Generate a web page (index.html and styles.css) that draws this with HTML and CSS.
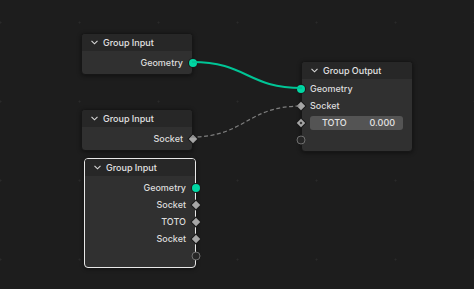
FILE: index.html
```html
<!DOCTYPE html>
<html>
<head>
<meta charset="utf-8">
<link rel="stylesheet" href="styles.css">
</head>
<body>
<div class="canvas">
  <svg class="links" width="474" height="289" viewBox="0 0 474 289">
    <path d="M192,62 C247,62 247,88 302,88" class="link-geo"/>
    <path d="M191,137 C246,137 246,106 302,106" class="link-dash"/>
  </svg>

  <div class="node n1">
    <div class="header"><svg class="chev" width="7" height="5" viewBox="0 0 7 5"><polyline points="0.5,0.8 3.5,3.8 6.5,0.8"/></svg><span>Group Input</span></div>
    <div class="body">
      <div class="row out">Geometry<i class="sock geo"></i></div>
    </div>
  </div>

  <div class="node n2">
    <div class="header"><svg class="chev" width="7" height="5" viewBox="0 0 7 5"><polyline points="0.5,0.8 3.5,3.8 6.5,0.8"/></svg><span>Group Input</span></div>
    <div class="body">
      <div class="row out">Socket<i class="sock dia"></i></div>
    </div>
  </div>

  <div class="node n3 selected">
    <div class="header"><svg class="chev" width="7" height="5" viewBox="0 0 7 5"><polyline points="0.5,0.8 3.5,3.8 6.5,0.8"/></svg><span>Group Input</span></div>
    <div class="body">
      <div class="row out">Geometry<i class="sock geo"></i></div>
      <div class="row out">Socket<i class="sock dia"></i></div>
      <div class="row out">TOTO<i class="sock dia"></i></div>
      <div class="row out">Socket<i class="sock dia"></i></div>
      <div class="row out"><i class="sock virt"></i></div>
    </div>
  </div>

  <div class="node n4">
    <div class="header"><svg class="chev" width="7" height="5" viewBox="0 0 7 5"><polyline points="0.5,0.8 3.5,3.8 6.5,0.8"/></svg><span>Group Output</span></div>
    <div class="body tight">
      <div class="row in"><i class="sock geo"></i>Geometry</div>
      <div class="row in"><i class="sock dia"></i>Socket</div>
      <div class="row in"><i class="sock dia dot"></i><div class="field"><span>TOTO</span><span>0.000</span></div></div>
      <div class="row in"><i class="sock virt"></i></div>
    </div>
  </div>
</div>
</body>
</html>
```

FILE: styles.css
```css
html, body {
  margin: 0;
  padding: 0;
  background: #1d1d1d;
}
.canvas {
  position: relative;
  width: 474px;
  height: 289px;
  overflow: hidden;
  background-color: #1d1d1d;
  background-image: radial-gradient(circle, #2a2a2a 0.8px, transparent 1.2px);
  background-size: 79px 79px;
  background-position: -39px -17px;
  font-family: Inter, "DejaVu Sans", sans-serif;
  font-size: 9px;
  font-weight: 500;
  color: #dddddd;
}
.links {
  position: absolute;
  left: 0;
  top: 0;
  z-index: 2;
  pointer-events: none;
}
.link-geo {
  fill: none;
  stroke: #00c596;
  stroke-width: 2;
}
.link-dash {
  fill: none;
  stroke: #7e7e7e;
  stroke-width: 1.2;
  stroke-dasharray: 4 2.5;
}
.node {
  position: absolute;
  background: #303030;
  border: 1px solid #161616;
  border-radius: 4px;
  box-shadow: 0 1px 4px rgba(0,0,0,0.45);
  z-index: 1;
}
.node.selected {
  border-color: #e8e8e8;
}
.n1 { left: 81px; top: 33px; width: 110px; }
.n2 { left: 81px; top: 109px; width: 110px; }
.n3 { left: 84px; top: 158px; width: 110px; }
.n4 { left: 301px; top: 61px; width: 110px; }
.header {
  height: 17px;
  display: flex;
  align-items: center;
  gap: 5px;
  padding-left: 9px;
  background: #272727;
  border-radius: 3px 3px 0 0;
  color: #e2e2e2;
}
.chev {
  fill: none;
  stroke: #d8d8d8;
  stroke-width: 1.1;
}
.body {
  padding: 3px 0 3px;
}
.body.tight {
  padding: 1px 0 3px;
}
.row {
  position: relative;
  height: 17px;
  display: flex;
  align-items: center;
}
.row.out {
  justify-content: flex-end;
  padding-right: 9px;
}
.row.in {
  padding-left: 8px;
}
.sock {
  position: absolute;
  top: 50%;
  z-index: 3;
}
.row.out .sock { right: -1px; transform: translate(50%, -50%); }
.row.in .sock { left: -1px; transform: translate(-50%, -50%); }
.sock.geo {
  width: 8px;
  height: 8px;
  border-radius: 50%;
  background: #00d6a3;
  box-shadow: 0 0 0 1px #1a1a1a;
}
.sock.dia {
  width: 6px;
  height: 6px;
  background: #a6a6a6;
  box-shadow: 0 0 0 1px #1a1a1a;
}
.row.out .sock.dia { transform: translate(50%, -50%) rotate(45deg); }
.row.in .sock.dia { transform: translate(-50%, -50%) rotate(45deg); }
.sock.dia.dot::after {
  content: "";
  position: absolute;
  left: 2px;
  top: 2px;
  width: 2px;
  height: 2px;
  background: #2a2a2a;
}
.sock.virt {
  width: 7px;
  height: 7px;
  border-radius: 50%;
  background: #262626;
  border: 1px solid #6e6e6e;
}
.field {
  flex: 1;
  margin-right: 9px;
  height: 14px;
  background: #545454;
  border-radius: 3px;
  display: flex;
  align-items: center;
  justify-content: space-between;
  padding: 0 8px 0 12px;
  color: #e4e4e4;
}
```
